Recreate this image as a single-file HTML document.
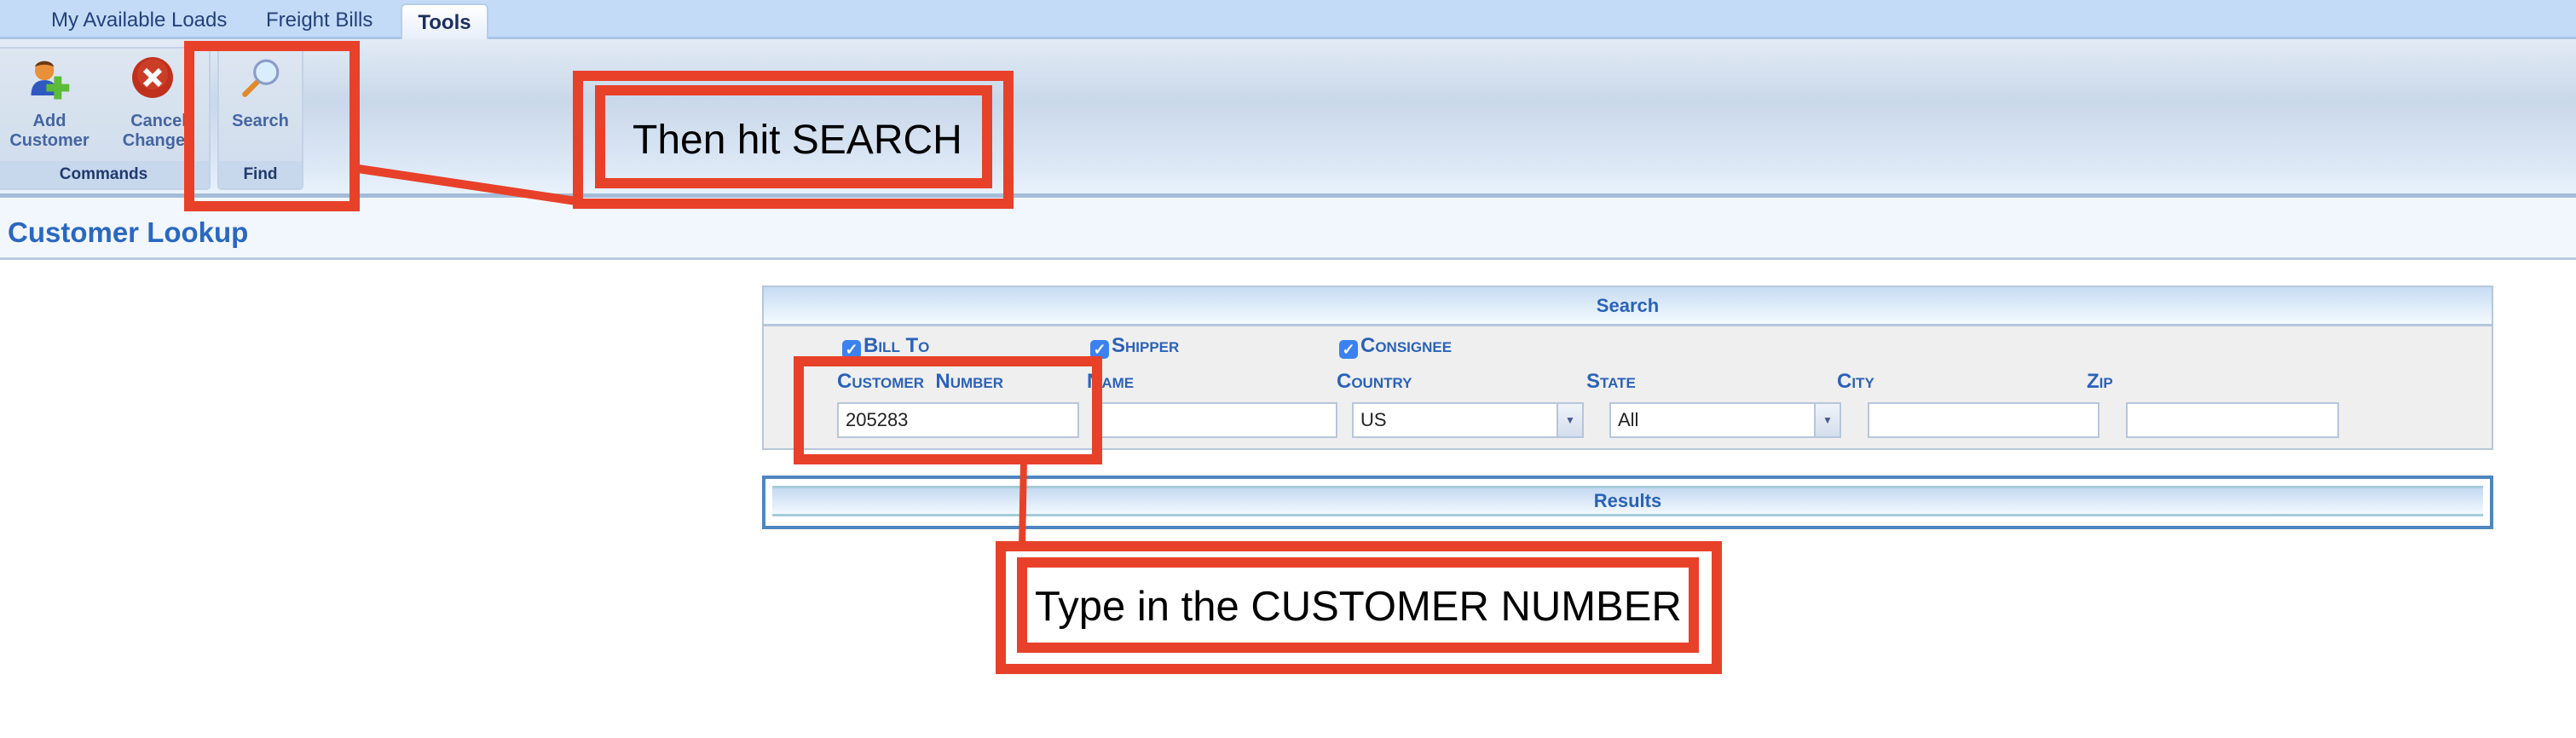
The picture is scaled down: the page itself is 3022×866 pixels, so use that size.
<!DOCTYPE html>
<html><head><meta charset="utf-8"><style>
*{margin:0;padding:0;box-sizing:border-box}
body{width:3022px;height:866px;background:#fff;position:relative;overflow:hidden;font-family:"Liberation Sans",sans-serif}
.abs{position:absolute}
.tabs{left:0;top:0;width:3022px;height:46px;background:#c4dbf8;border-bottom:3px solid #a9c4e6}
.tab{position:absolute;top:10px;font-size:24px;color:#23407a}
.ribbon{left:0;top:46px;width:3022px;height:186px;background:linear-gradient(#e3ebf5,#c9d8ea 40%,#dbe7f5 80%,#e8f2fc);border-bottom:5px solid #a3bcd8}
.grp{position:absolute;top:9px;height:168px;border:2px solid #c3d2e6;border-radius:5px;background:linear-gradient(#dde6f1,#cfdcec)}
.glab{position:absolute;left:0;right:0;bottom:0;height:32px;background:#c7d7ec;text-align:center;font-weight:bold;font-size:19px;line-height:32px;color:#1f3a6e}
.blab{position:absolute;text-align:center;font-weight:bold;font-size:20px;line-height:23px;color:#4465a2}
.lookup{left:0;top:232px;width:3022px;height:73px;background:#f2f7fd;border-bottom:3px solid #b9cbe0}
.red{position:absolute;border:12px solid #e8412a}
.panel{left:894px;top:335px;width:2031px;height:193px;background:#efefef;border:2px solid #b6c7dc}
.ph{position:absolute;left:0;top:0;right:0;height:46px;background:linear-gradient(#c7dbf2,#f4fbff);border-bottom:3px solid #b6c7dc;text-align:center;font-weight:bold;font-size:22px;line-height:44px;color:#2a62b8}
.lbl{position:absolute;font-weight:bold;color:#2a62b8;font-size:24px;font-variant:small-caps}
.cb{display:inline-block;width:22px;height:22px;border-radius:5px;background:#3b82f0;color:#fff;font-size:18px;line-height:22px;text-align:center;vertical-align:-3px;margin-right:3px}
.inp{position:absolute;top:135px;height:42px;background:#fff;border:2px solid #b7c6dc;font-size:22px;line-height:38px;padding-left:8px;color:#222}
.dd{position:absolute;right:0;top:0;width:30px;height:38px;background:linear-gradient(#f0f4fa,#d4deec);border-left:2px solid #b7c6dc;color:#4a5a90;font-size:12px;text-align:center;line-height:38px}
.note{position:absolute;font-size:48px;color:#000}
</style></head><body>
<div class="abs tabs">
 <div class="tab" style="left:60px">My Available Loads</div>
 <div class="tab" style="left:312px">Freight Bills</div>
 <div class="abs" style="left:470px;top:4px;width:103px;height:44px;background:linear-gradient(#fff,#e6eef9);border:2px solid #b7cde9;border-bottom:none;border-radius:6px 6px 0 0;text-align:center;font-weight:bold;font-size:24px;line-height:42px;color:#1c2f5c">Tools</div>
</div>
<div class="abs ribbon">
 <div class="grp" style="left:-4px;width:251px">
  <svg class="abs" style="left:34px;top:8px" width="56" height="56" viewBox="0 0 50 50"><path d="M4 42c0-12 6-16 14-16s14 4 14 16z" fill="#2f58c0"/><circle cx="18" cy="16" r="10" fill="#e8903a"/><path d="M8 12c2-8 18-8 20 0c-6-3-14-3-20 0z" fill="#6b3a14"/><path d="M32 22v24M20 34h24" stroke="#5dbb3a" stroke-width="8"/></svg>
  <svg class="abs" style="left:155px;top:8px" width="52" height="52" viewBox="0 0 52 52"><circle cx="26" cy="26" r="24" fill="#c0301c"/><circle cx="26" cy="22" r="18" fill="#d44a30" opacity=".5"/><path d="M17 17l18 18M35 17l-18 18" stroke="#fff" stroke-width="6"/></svg>
  <div class="blab" style="left:10px;width:100px;top:74px">Add<br>Customer</div>
  <div class="blab" style="left:138px;width:100px;top:74px">Cancel<br>Changes</div>
  <div class="glab">Commands</div>
 </div>
 <div class="grp" style="left:255px;width:101px">
  <svg class="abs" style="left:24px;top:10px" width="50" height="50" viewBox="0 0 48 48"><path d="M6 42l14-14" stroke="#e08a2c" stroke-width="6" stroke-linecap="round"/><circle cx="30" cy="17" r="13" fill="#d8eefc" stroke="#8a9cc8" stroke-width="3"/></svg>
  <div class="blab" style="left:0;width:97px;top:74px">Search</div>
  <div class="glab">Find</div>
 </div>
</div>
<div class="abs lookup"><div class="abs" style="left:9px;top:22px;font-weight:bold;font-size:33px;color:#2a68c0">Customer Lookup</div></div>

<div class="abs panel">
 <div class="ph">Search</div>
 <div class="lbl" style="left:92px;top:55px"><span class="cb">✓</span>Bill To</div>
 <div class="lbl" style="left:383px;top:55px"><span class="cb">✓</span>Shipper</div>
 <div class="lbl" style="left:675px;top:55px"><span class="cb">✓</span>Consignee</div>
 <div class="lbl" style="left:86px;top:97px">Customer&nbsp; Number</div>
 <div class="lbl" style="left:379px;top:97px">Name</div>
 <div class="lbl" style="left:672px;top:97px">Country</div>
 <div class="lbl" style="left:965px;top:97px">State</div>
 <div class="lbl" style="left:1259px;top:97px">City</div>
 <div class="lbl" style="left:1552px;top:97px">Zip</div>
 <div class="inp" style="left:86px;width:284px">205283</div>
 <div class="inp" style="left:393px;width:280px"></div>
 <div class="inp" style="left:690px;width:272px">US<div class="dd">▼</div></div>
 <div class="inp" style="left:992px;width:272px">All<div class="dd">▼</div></div>
 <div class="inp" style="left:1295px;width:272px"></div>
 <div class="inp" style="left:1598px;width:250px"></div>
</div>
<div class="abs" style="left:894px;top:558px;width:2031px;height:63px;border:4px solid #4f86c0;background:#fff">
 <div class="abs" style="left:8px;top:8px;right:8px;height:36px;background:linear-gradient(#c5d9f1,#f2f9ff);border-top:3px solid #a6ccd9;border-bottom:3px solid #a6ccd9;text-align:center;font-weight:bold;font-size:22px;line-height:30px;color:#2a62b8">Results</div>
</div>

<div class="red" style="left:216px;top:48px;width:206px;height:200px"></div>
<svg class="abs" style="left:0;top:0" width="3022" height="866"><line x1="420" y1="198" x2="676" y2="236" stroke="#e8412a" stroke-width="10"/><line x1="1201" y1="540" x2="1199" y2="640" stroke="#e8412a" stroke-width="8"/></svg>
<div class="red" style="left:672px;top:83px;width:517px;height:162px"></div>
<div class="red" style="left:698px;top:100px;width:466px;height:121px"></div>
<div class="note" style="left:742px;top:137px">Then hit SEARCH</div>
<div class="red" style="left:931px;top:418px;width:362px;height:127px"></div>
<div class="red" style="left:1168px;top:635px;width:852px;height:156px"></div>
<div class="red" style="left:1193px;top:654px;width:800px;height:112px"></div>
<div class="note" style="left:1214px;top:684px;font-size:49px">Type in the CUSTOMER NUMBER</div>
</body></html>
